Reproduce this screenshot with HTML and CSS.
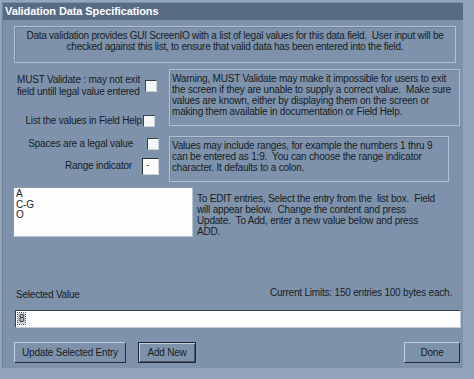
FILE: index.html
```html
<!DOCTYPE html>
<html>
<head>
<meta charset="utf-8">
<link rel="stylesheet" href="styles.css">
</head>
<body>
<div class="window">
  <div class="titlebar">Validation Data Specifications</div>
  <div class="desc">Data validation provides GUI ScreenIO with a list of legal values for this data field.&nbsp; User input will be<br>checked against this list, to ensure that valid data has been entered into the field.</div>

  <div class="options">
    <div class="left">
      <div class="opt opt-must">
        <span class="lbl">MUST Validate : may not exit<br>field untill legal value entered</span>
        <span class="chk"></span>
      </div>
      <div class="opt opt-help">
        <span class="lbl">List the values in Field Help</span>
        <span class="chk"></span>
      </div>
      <div class="opt opt-spaces">
        <span class="lbl">Spaces are a legal value</span>
        <span class="chk"></span>
      </div>
      <div class="opt opt-range">
        <span class="lbl">Range indicator</span>
        <span class="rng">-</span>
      </div>
    </div>
    <div class="right">
      <div class="note warn">Warning, MUST Validate may make it impossible for users to exit<br>the screen if they are unable to supply a correct value.&nbsp; Make sure<br>values are known, either by displaying them on the screen or<br>making them available in documentation or Field Help.</div>
      <div class="note ranges">Values may include ranges, for example the numbers 1 thru 9<br>can be entered as 1:9.&nbsp; You can choose the range indicator<br>character. It defaults to a colon.</div>
    </div>
  </div>

  <div class="listrow">
    <div class="listbox">
      <div>A</div>
      <div>C-G</div>
      <div>O</div>
    </div>
    <div class="edithelp">To EDIT entries, Select the entry from the&nbsp; list box.&nbsp; Field<br>will appear below.&nbsp; Change the content and press<br>Update.&nbsp; To Add, enter a new value below and press<br>ADD.</div>
  </div>

  <div class="selrow">
    <span class="sellbl">Selected Value</span>
    <span class="limits">Current Limits: 150 entries 100 bytes each.</span>
  </div>
  <div class="valinput"><span class="caret">8</span></div>

  <div class="buttons">
    <button class="btn btn-update">Update Selected Entry</button>
    <button class="btn btn-add">Add New</button>
    <span class="spacer"></span>
    <button class="btn btn-done">Done</button>
  </div>
</div>
</body>
</html>
```

FILE: styles.css
```css
html, body {
  margin: 0;
  padding: 0;
}
body {
  width: 474px;
  height: 379px;
  background: #93a5ba;
  font-family: "Liberation Sans", Arial, sans-serif;
  font-size: 10px;
  letter-spacing: -0.2px;
  color: #161b24;
  overflow: hidden;
}
.window {
  width: 460px;
  height: 366px;
  margin: 2px 0 0 2px;
  background: #7e93ab;
  border-left: 1px solid #6e8399;
  display: flex;
  flex-direction: column;
}
.titlebar {
  height: 17px;
  line-height: 17px;
  margin-top: 1px;
  background: #576b84;
  color: #ffffff;
  font-weight: bold;
  font-size: 11px;
  padding-left: 2px;
  letter-spacing: -0.1px;
}
.desc {
  margin: 6px 0 0 11px;
  width: 442px;
  border: 1px solid #b3c2d2;
  box-shadow: inset 1px 1px 0 #70859d;
  text-align: center;
  line-height: 11px;
  padding-top: 3px;
  box-sizing: border-box;
  height: 37px;
  white-space: nowrap;
  letter-spacing: -0.25px;
}
.options {
  display: flex;
  margin-top: 6px;
}
.left {
  width: 166px;
  display: flex;
  flex-direction: column;
}
.opt {
  display: flex;
  align-items: center;
  justify-content: flex-end;
  line-height: 12px;
  white-space: nowrap;
}
.opt .lbl {
  text-align: left;
}
.opt-must {
  margin-top: 4px;
  height: 26px;
  padding-right: 12px;
}
.opt-must .lbl { margin-right: 5px; }
.opt-help {
  margin-top: 15px;
  height: 14px;
  padding-right: 14px;
}
.opt-help .lbl { margin-right: 1px; }
.opt-spaces {
  margin-top: 9px;
  height: 14px;
  padding-right: 10px;
}
.opt-spaces .lbl { margin-right: 14px; }
.opt-range {
  margin-top: 6px;
  height: 18px;
  padding-right: 10px;
}
.opt-range .lbl { margin-right: 10px; }
.chk {
  width: 10px;
  height: 10px;
  background: #f4f6f8;
  border-top: 1px solid #3a3f48;
  border-left: 1px solid #3a3f48;
  border-bottom: 1px solid #c8d2dd;
  border-right: 1px solid #c8d2dd;
}
.rng {
  background: #fbfbfb;
  border-top: 1px solid #2b3038;
  border-left: 1px solid #2b3038;
  border-bottom: 1px solid #c8d2dd;
  border-right: 1px solid #c8d2dd;
  font-size: 9px;
  line-height: 13px;
  padding-left: 3px;
  box-sizing: border-box;
  width: 17px;
  height: 17px;
}
.right {
  display: flex;
  flex-direction: column;
}
.note {
  border: 1px solid #b3c2d2;
  box-shadow: inset 1px 1px 0 #70859d;
  line-height: 11px;
  padding: 3px 0 0 2px;
  box-sizing: border-box;
  white-space: nowrap;
}
.warn {
  width: 291px;
  height: 57px;
}
.ranges {
  margin-top: 10px;
  width: 280px;
  height: 46px;
}
.listrow {
  display: flex;
  margin-top: 5px;
  margin-left: 10px;
}
.listbox {
  width: 180px;
  height: 50px;
  background: #fdfdfd;
  border-top: 1px solid #8c99a8;
  border-left: 1px solid #8c99a8;
  border-bottom: 1px solid #b8c5d3;
  border-right: 1px solid #b8c5d3;
  box-sizing: border-box;
  padding: 1px 0 0 2px;
  line-height: 10.5px;
  font-size: 10px;
}
.edithelp {
  margin-left: 4px;
  margin-top: 6px;
  line-height: 11px;
  white-space: nowrap;
}
.selrow {
  display: flex;
  justify-content: space-between;
  align-items: flex-start;
  margin-top: 48px;
  margin-left: 13px;
  margin-right: 11px;
  height: 14px;
}
.sellbl {
  margin-top: 4px;
}
.limits {
  margin-top: 2px;
}
.valinput {
  margin: 11px 0 0 12px;
  width: 446px;
  height: 18px;
  background: #ffffff;
  border-top: 1px solid #3a3f48;
  border-left: 1px solid #3a3f48;
  border-bottom: 1px solid #c0ccd8;
  border-right: 1px solid #c0ccd8;
  box-sizing: border-box;
  padding: 2px 0 0 2px;
}
.caret {
  display: inline-block;
  background: #c8ccd2;
  outline: 1px dotted #555;
  font-size: 10px;
  line-height: 11px;
  padding: 0 1px;
}
.buttons {
  display: flex;
  margin: 14px 0 0 11px;
  padding-right: 3px;
}
.btn {
  height: 21px;
  background: #7e93ab;
  font-family: "Liberation Sans", Arial, sans-serif;
  font-size: 10px;
  letter-spacing: -0.2px;
  color: #161b24;
  border-top: 1px solid #c3d0dd;
  border-left: 1px solid #c3d0dd;
  border-bottom: 1px solid #262c36;
  border-right: 1px solid #262c36;
  padding: 0;
  margin: 0;
}
.btn-update {
  width: 112px;
}
.btn-add {
  width: 58px;
  margin-left: 12px;
  border: 1px solid #20262f;
  box-shadow: inset 1px 1px 0 #c3d0dd, inset -1px -1px 0 #4a5668;
}
.spacer {
  flex: 1;
}
.btn-done {
  width: 56px;
}
```
